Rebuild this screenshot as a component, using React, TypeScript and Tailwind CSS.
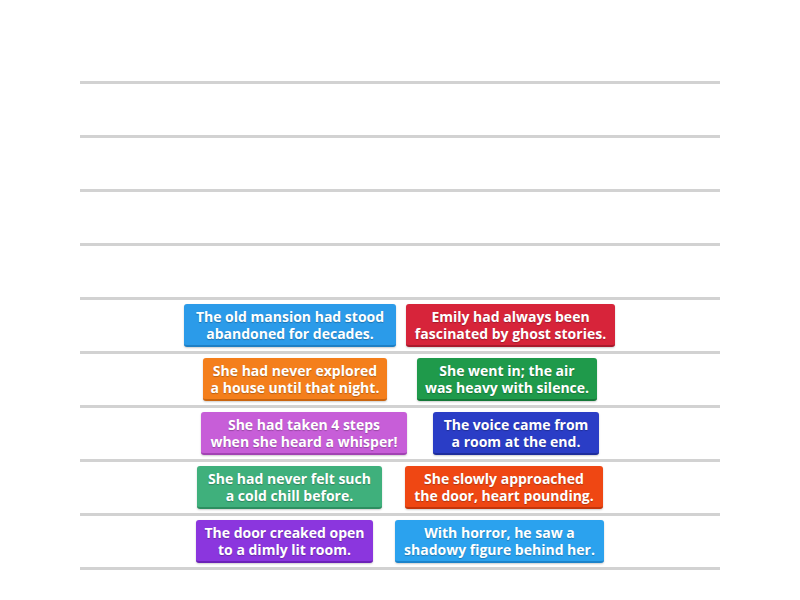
import React from "react";

type Tile = { lines: [string, string]; w: string; ml: string; bg: string };

const rows: Tile[][] = [
  [
    { lines: ["The old mansion had stood", "abandoned for decades."], w: "w-[212px]", ml: "ml-[104px]", bg: "bg-[#2b9be9] border-[#1e7fc4]" },
    { lines: ["Emily had always been", "fascinated by ghost stories."], w: "w-[209px]", ml: "ml-[10px]", bg: "bg-[#d7243a] border-[#a91a2c]" },
  ],
  [
    { lines: ["She had never explored", "a house until that night."], w: "w-[184px]", ml: "ml-[123px]", bg: "bg-[#f47f1c] border-[#c96510]" },
    { lines: ["She went in; the air", "was heavy with silence."], w: "w-[180px]", ml: "ml-[30px]", bg: "bg-[#1f9a4b] border-[#157838]" },
  ],
  [
    { lines: ["She had taken 4 steps", "when she heard a whisper!"], w: "w-[206px]", ml: "ml-[121px]", bg: "bg-[#c75ed8] border-[#a243b3]" },
    { lines: ["The voice came from", "a room at the end."], w: "w-[166px]", ml: "ml-[26px]", bg: "bg-[#2a3dc6] border-[#1e2d9c]" },
  ],
  [
    { lines: ["She had never felt such", "a cold chill before."], w: "w-[185px]", ml: "ml-[117px]", bg: "bg-[#3fb07c] border-[#2d8e60]" },
    { lines: ["She slowly approached", "the door, heart pounding."], w: "w-[198px]", ml: "ml-[23px]", bg: "bg-[#ef4713] border-[#c3350a]" },
  ],
  [
    { lines: ["The door creaked open", "to a dimly lit room."], w: "w-[177px]", ml: "ml-[116px]", bg: "bg-[#8b36de] border-[#6c22b8]" },
    { lines: ["With horror, he saw a", "shadowy figure behind her."], w: "w-[209px]", ml: "ml-[22px]", bg: "bg-[#2ba2ee] border-[#1c84cb]" },
  ],
];

function TileBox({ t }: { t: Tile }) {
  return (
    <div
      className={`${t.w} ${t.ml} ${t.bg} h-[43px] shrink-0 rounded-[3px] border-b-2 flex items-center justify-center text-white font-bold text-[14px] leading-[17px] text-center [text-shadow:0_1px_1px_rgba(0,0,0,0.25)] shadow-[0_1px_2px_rgba(0,0,0,0.2)] whitespace-nowrap`}
    >
      <p>
        {t.lines[0]}
        <br />
        {t.lines[1]}
      </p>
    </div>
  );
}

export default function App() {
  const empty = [0, 1, 2, 3];
  return (
    <div className="w-[800px] h-[600px] bg-white overflow-hidden" style={{ fontFamily: '"Open Sans", "Noto Sans", sans-serif' }}>
      <div className="w-[640px] ml-[80px] mt-[81px] border-t-[3px] border-[#d2d2d2]">
        {empty.map((i) => (
          <div key={i} className="h-[54px] border-b-[3px] border-[#d2d2d2]" />
        ))}
        {rows.map((r, i) => (
          <div key={`r${i}`} className="h-[54px] border-b-[3px] border-[#d2d2d2] flex items-center">
            {r.map((t, j) => (
              <TileBox key={j} t={t} />
            ))}
          </div>
        ))}
      </div>
    </div>
  );
}
